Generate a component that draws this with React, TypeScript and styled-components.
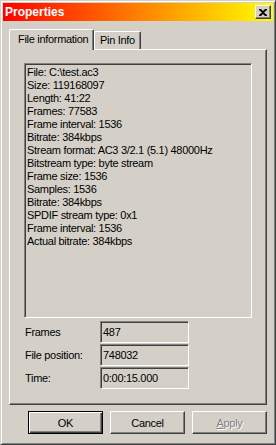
import React from 'react'
import styled, { createGlobalStyle } from 'styled-components'

const GlobalStyle = createGlobalStyle`
  html, body {
    margin: 0;
    padding: 0;
    background: #d4d0c8;
  }
  * {
    box-sizing: border-box;
  }
`

const Window = styled.div`
  width: 276px;
  height: 445px;
  display: flex;
  flex-direction: column;
  background: #d4d0c8;
  border: 1px solid;
  border-color: #d4d0c8 #404040 #404040 #d4d0c8;
  box-shadow: inset 1px 1px #fff, inset -1px -1px #808080;
  padding: 2px;
  font-family: "Liberation Sans", Arial, sans-serif;
  font-size: 11px;
  letter-spacing: -0.3px;
  color: #000;
`

const TitleBar = styled.div`
  height: 18px;
  display: flex;
  align-items: center;
  justify-content: space-between;
  padding: 0 2px 0 2px;
  background: linear-gradient(to right, #ff0000, #ffff00);
`

const Title = styled.span`
  color: #fff;
  font-weight: bold;
  font-size: 12px;
  letter-spacing: 0;
`

const CloseButton = styled.div`
  width: 16px;
  height: 14px;
  display: flex;
  align-items: center;
  justify-content: center;
  background: #d4d0c8;
  border: 1px solid;
  border-color: #fff #404040 #404040 #fff;
  box-shadow: inset -1px -1px #808080;
`

const Client = styled.div`
  flex: 1;
  display: flex;
  flex-direction: column;
  padding: 8px 6px 0 6px;
`

const TabStrip = styled.div`
  height: 20px;
  display: flex;
  align-items: flex-end;
`

const Tab = styled.div<{ $active?: boolean }>`
  position: relative;
  z-index: ${p => (p.$active ? 1 : 0)};
  height: ${p => (p.$active ? '21px' : '18px')};
  margin-bottom: ${p => (p.$active ? '-1px' : '0')};
  width: ${p => (p.$active ? '85px' : '47px')};
  padding: ${p => (p.$active ? '3px 0 0 8px' : '2px 0 0 5px')};
  background: #d4d0c8;
  border-top: 1px solid #fff;
  border-left: 1px solid #fff;
  border-right: 1px solid #404040;
  border-top-left-radius: 2px;
  border-top-right-radius: 2px;
  box-shadow: inset -1px 0 #808080;
  white-space: nowrap;
`

const TabPanel = styled.div`
  height: 356px;
  display: flex;
  flex-direction: column;
  border: 1px solid;
  border-color: #fff #404040 #404040 #fff;
  box-shadow: inset -1px -1px #808080;
  padding: 13px 0 0 14px;
`

const InfoBox = styled.div`
  width: 228px;
  height: 255px;
  border: 1px solid;
  border-color: #808080 #fff #fff #808080;
  box-shadow: inset 1px 1px #404040;
  padding: 2px 0 0 2px;
  line-height: 13px;
`

const InfoLine = styled.div`
  white-space: nowrap;
`

const Fields = styled.div`
  margin-top: 3px;
  margin-left: 1px;
  display: grid;
  grid-template-columns: 75px 89px;
  grid-auto-rows: 22px;
  row-gap: 1px;
  align-items: center;
`

const Label = styled.span`
  white-space: nowrap;
`

const ValueBox = styled.div`
  height: 22px;
  display: flex;
  align-items: center;
  padding: 0 0 0 2px;
  border: 1px solid;
  border-color: #808080 #fff #fff #808080;
  box-shadow: inset 1px 1px #404040;
`

const ButtonRow = styled.div`
  margin-top: 6px;
  display: flex;
  justify-content: flex-end;
  gap: 7px;
`

const Button = styled.div<{ $default?: boolean; $disabled?: boolean }>`
  width: 75px;
  height: 23px;
  display: flex;
  align-items: center;
  justify-content: center;
  background: #d4d0c8;
  border: 1px solid;
  border-color: ${p => (p.$default ? '#000' : '#fff #404040 #404040 #fff')};
  box-shadow: ${p =>
    p.$default
      ? 'inset 1px 1px #fff, inset -1px -1px #404040, inset -2px -2px #808080'
      : 'inset -1px -1px #808080'};
  color: ${p => (p.$disabled ? '#808080' : '#000')};
  text-shadow: ${p => (p.$disabled ? '1px 1px #fff' : 'none')};
`

const lines = [
  'File: C:\\test.ac3',
  'Size: 119168097',
  'Length: 41:22',
  'Frames: 77583',
  'Frame interval: 1536',
  'Bitrate: 384kbps',
  'Stream format: AC3 3/2.1 (5.1) 48000Hz',
  'Bitstream type: byte stream',
  'Frame size: 1536',
  'Samples: 1536',
  'Bitrate: 384kbps',
  'SPDIF stream type: 0x1',
  'Frame interval: 1536',
  'Actual bitrate: 384kbps',
]

const fields = [
  { label: 'Frames', value: '487' },
  { label: 'File position:', value: '748032' },
  { label: 'Time:', value: '0:00:15.000' },
]

export default function App() {
  return (
    <>
      <GlobalStyle />
      <Window>
        <TitleBar>
          <Title>Properties</Title>
          <CloseButton>
            <svg width="8" height="7" viewBox="0 0 8 7">
              <path d="M0 0h2l2 2 2-2h2v1L5 3.5 8 6v1H6L4 5 2 7H0V6l3-2.5L0 1z" fill="#000" />
            </svg>
          </CloseButton>
        </TitleBar>
        <Client>
          <TabStrip>
            <Tab $active>File information</Tab>
            <Tab>Pin Info</Tab>
          </TabStrip>
          <TabPanel>
            <InfoBox>
              {lines.map((l, i) => (
                <InfoLine key={i}>{l}</InfoLine>
              ))}
            </InfoBox>
            <Fields>
              {fields.map(f => (
                <React.Fragment key={f.label}>
                  <Label>{f.label}</Label>
                  <ValueBox>{f.value}</ValueBox>
                </React.Fragment>
              ))}
            </Fields>
          </TabPanel>
          <ButtonRow>
            <Button $default>OK</Button>
            <Button>Cancel</Button>
            <Button $disabled>
              <span><u>A</u>pply</span>
            </Button>
          </ButtonRow>
        </Client>
      </Window>
    </>
  )
}
